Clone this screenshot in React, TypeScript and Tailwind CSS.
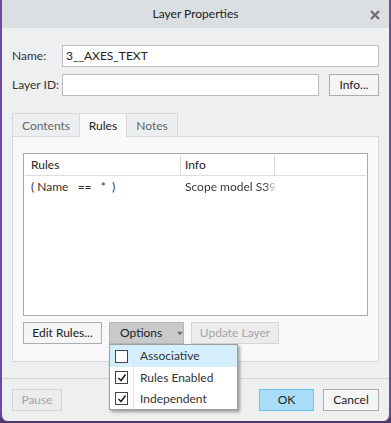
import { useState } from "react";

function Check() {
    return (
        <svg width="10" height="10" viewBox="0 0 10 10" className="block">
            <polyline points="1.5,5 4,7.5 8.5,1.5" fill="none" stroke="#222" strokeWidth="1.6" />
        </svg>
    );
}

function MenuItem({ label, checked, active, tall }: { label: string; checked: boolean; active?: boolean; tall?: boolean }) {
    return (
        <div className={"flex items-center " + (tall ? "h-[22px] " : "h-[21px] ") + (active ? "bg-[#d5eefb]" : "")}>
            <div className="flex h-full w-[24px] items-center justify-center border-r border-[#e3e3e3]">
                <div className="flex h-[13px] w-[13px] items-center justify-center border border-[#444] bg-white">
                    {checked && <Check />}
                </div>
            </div>
            <span className="pl-[6px] text-[#333]">{label}</span>
        </div>
    );
}

export default function App() {
    const [tab, setTab] = useState("Rules");
    const tabs = [
        { name: "Contents", w: "w-[68px]" },
        { name: "Rules", w: "w-[48px]" },
        { name: "Notes", w: "w-[52px]" },
    ];

    return (
        <div
            className="h-[423px] w-[391px] overflow-hidden bg-[#4b3a6a] text-[12px] text-[#333]"
            style={{ fontFamily: "Lato, 'Open Sans', sans-serif" }}
        >
            <div className="flex h-[421px] flex-col rounded-b-[7px] border-x-2 border-[#6b4c9a] bg-[#eeeff1]">
                {/* title bar */}
                <div className="relative flex h-[28px] shrink-0 items-center justify-center bg-[#dcdfe1] text-[#222]">
                    Layer Properties
                    <svg width="10" height="10" viewBox="0 0 10 10" className="absolute right-[9px] top-[10px]">
                        <path d="M1 1 L9 9 M9 1 L1 9" stroke="#6a6a6a" strokeWidth="2" />
                    </svg>
                </div>

                <div className="flex flex-col px-[10px] pt-[17px]">
                    <div className="flex h-[22px] items-center">
                        <span className="w-[50px]">Name:</span>
                        <div className="flex h-[22px] flex-1 items-center border border-[#b9bbbe] bg-white px-[3px] text-[#222]">
                            3__AXES_TEXT
                        </div>
                    </div>
                    <div className="mt-[7px] flex h-[22px] items-center">
                        <span className="w-[50px]">Layer ID:</span>
                        <div className="h-[22px] w-[257px] border border-[#b9bbbe] bg-white" />
                        <button className="ml-[10px] h-[22px] w-[50px] border border-[#adadad] bg-[#f5f5f5] text-[#222]">
                            Info...
                        </button>
                    </div>

                    {/* tabs */}
                    <div className="mt-[17px] flex h-[23px]">
                        {tabs.map((t) => (
                            <button
                                key={t.name}
                                onClick={() => setTab(t.name)}
                                className={
                                    "h-[24px] border border-b-0 border-[#d9d9d9] " +
                                    t.w +
                                    (tab === t.name
                                        ? " z-10 -ml-px bg-[#f9f9f9] text-[#222]"
                                        : " -ml-px bg-[#eceef0] text-[#666] first:ml-0")
                                }
                            >
                                {t.name}
                            </button>
                        ))}
                    </div>
                    <div className="flex h-[226px] flex-col border border-[#d9d9d9] bg-[#f9f9f9] px-[10px] pt-[16px]">
                        <div className="flex h-[163px] flex-col border border-[#a9a9a9] bg-white p-px">
                            <div className="flex h-[21px] border-b border-[#dcdcdc] text-[#222]">
                                <div className="flex w-[156px] items-center border-r border-[#dcdcdc] pl-[6px]">Rules</div>
                                <div className="flex w-[94px] items-center border-r border-[#dcdcdc] pl-[4px]">Info</div>
                                <div className="flex-1" />
                            </div>
                            <div className="flex h-[22px] items-center">
                                <div className="w-[156px] whitespace-pre pl-[6px]">( Name   ==   *  )</div>
                                <div className="w-[94px] overflow-hidden whitespace-nowrap pl-[4px]">
                                    <span className="bg-[linear-gradient(90deg,#333_88%,rgba(51,51,51,0.1))] bg-clip-text text-transparent">
                                        Scope model S39
                                    </span>
                                </div>
                            </div>
                        </div>

                        <div className="mt-[6px] flex h-[22px] gap-[7px]">
                            <button className="w-[79px] border border-[#adadad] bg-[#f5f5f5] text-[#222]">Edit Rules...</button>
                            <div className="relative">
                                <button className="flex h-[22px] w-[75px] items-center border border-[#b5b6b8] bg-[#c8c9cb] pl-[10px] text-[#222]">
                                    Options
                                    <svg width="8" height="5" viewBox="0 0 8 5" className="ml-[15px]">
                                        <path d="M0 0 L8 0 L4 5 Z" fill="#6d6d6d" />
                                    </svg>
                                </button>
                                <div className="absolute left-0 top-[22px] z-20 w-[129px] border border-[#a0a0a0] bg-white shadow-[2px_2px_3px_rgba(0,0,0,0.35)]">
                                    <MenuItem label="Associative" checked={false} active tall />
                                    <MenuItem label="Rules Enabled" checked />
                                    <MenuItem label="Independent" checked />
                                </div>
                            </div>
                            <button className="w-[88px] border border-[#d5d5d5] bg-[#ececec] text-[#a5a5a5]">Update Layer</button>
                        </div>
                    </div>
                </div>

                <div className="mt-[16px] h-px bg-[#d4d4d6]" />

                <div className="flex px-[10px] pt-[10px]">
                    <button className="h-[22px] w-[50px] border border-[#d5d5d5] bg-[#ececec] text-[#a5a5a5]">Pause</button>
                    <div className="flex-1" />
                    <button className="h-[22px] w-[55px] border border-[#6cc4f0] bg-[#a9dcf9] text-[#222]">OK</button>
                    <button className="ml-[9px] h-[22px] w-[56px] border border-[#adadad] bg-[#f5f5f5] text-[#222]">Cancel</button>
                </div>
            </div>
        </div>
    );
}
